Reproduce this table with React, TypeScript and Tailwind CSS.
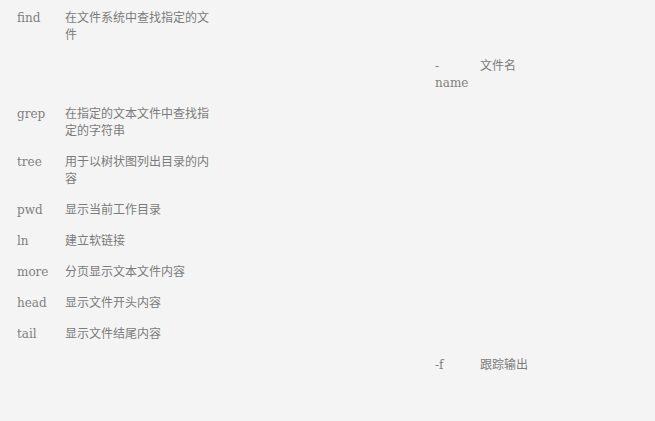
const ROWS: { cmd: string; desc: string; opt?: React.ReactNode; optDesc?: string }[] = [
  { cmd: 'find', desc: '在文件系统中查找指定的文件' },
  { cmd: '', desc: '', opt: (<>-<br />name</>), optDesc: '文件名' },
  { cmd: 'grep', desc: '在指定的文本文件中查找指定的字符串' },
  { cmd: 'tree', desc: '用于以树状图列出目录的内容' },
  { cmd: 'pwd', desc: '显示当前工作目录' },
  { cmd: 'ln', desc: '建立软链接' },
  { cmd: 'more', desc: '分页显示文本文件内容' },
  { cmd: 'head', desc: '显示文件开头内容' },
  { cmd: 'tail', desc: '显示文件结尾内容' },
  { cmd: '', desc: '', opt: '-f', optDesc: '跟踪输出' },
]

// DejaVu sits high in its line box; nudge it down to share the CJK baseline
const latin = "font-['DejaVu_Serif',serif] text-[12px] translate-y-[2px] text-[#808080]"
const cjk = "font-['Noto_Sans_CJK_SC','Noto_Sans',sans-serif] text-[12px]"

export default function App() {
  return (
    <div className="min-h-[421px] w-full bg-[#f4f4f4] pt-px text-[#7b7b7b]">
      <div className="flex flex-col">
        {ROWS.map((r, i) => (
          <div key={i} className="grid grid-cols-[17px_48px_370px_45px_1fr] py-[7px] leading-[17px]">
            <div />
            <div className={latin}>{r.cmd}</div>
            <div className={cjk}>
              <div className="w-[150px]">{r.desc}</div>
            </div>
            <div className={latin}>{r.opt}</div>
            <div className={cjk}>{r.optDesc}</div>
          </div>
        ))}
      </div>
    </div>
  )
}
